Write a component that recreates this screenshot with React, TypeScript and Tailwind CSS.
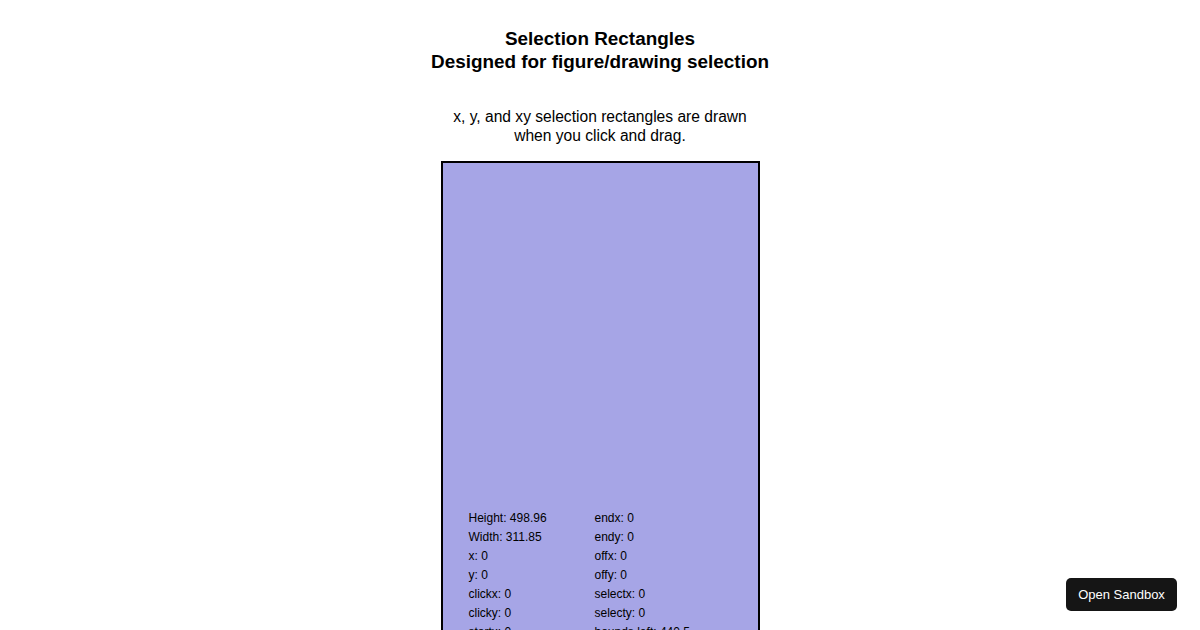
type Stat = { label: string; value: string };

const leftStats: Stat[] = [
  { label: 'Height', value: '498.96' },
  { label: 'Width', value: '311.85' },
  { label: 'x', value: '0' },
  { label: 'y', value: '0' },
  { label: 'clickx', value: '0' },
  { label: 'clicky', value: '0' },
  { label: 'startx', value: '0' },
  { label: 'starty', value: '0' },
];

const rightStats: Stat[] = [
  { label: 'endx', value: '0' },
  { label: 'endy', value: '0' },
  { label: 'offx', value: '0' },
  { label: 'offy', value: '0' },
  { label: 'selectx', value: '0' },
  { label: 'selecty', value: '0' },
  { label: 'bounds left', value: '440.5' },
  { label: 'bounds top', value: '161' },
];

export default function App() {
  return (
    <div className="relative min-h-[630px] bg-white font-['Liberation_Sans',Arial,sans-serif] text-black">
      <div className="flex flex-col items-center pt-[27px]">
        <h3 className="text-center text-[18.9px] font-bold leading-[23px]">
          Selection Rectangles
          <br />
          Designed for figure/drawing selection
        </h3>

        <p className="mt-[34px] text-center text-[15.6px] leading-[19px]">
          x, y, and xy selection rectangles are drawn
          <br />
          when you click and drag.
        </p>

        <div className="mt-[16px] h-[502px] w-[319px] border-2 border-black bg-[#a6a5e6] pl-[26px] pr-[24px] pt-[346px]">
          <div className="grid grid-cols-[126px_1fr] text-xs leading-[19px]">
            <StatColumn stats={leftStats} />
            <StatColumn stats={rightStats} />
          </div>
        </div>
      </div>

      <button className="fixed bottom-[19px] right-[23px] h-[33px] w-[111px] rounded-[5px] bg-[#151515] text-[13px] text-white">
        Open Sandbox
      </button>
    </div>
  );
}

function StatColumn({ stats }: { stats: Stat[] }) {
  return (
    <div>
      {stats.map((stat) => (
        <p key={stat.label}>
          {stat.label}: {stat.value}
        </p>
      ))}
    </div>
  );
}
